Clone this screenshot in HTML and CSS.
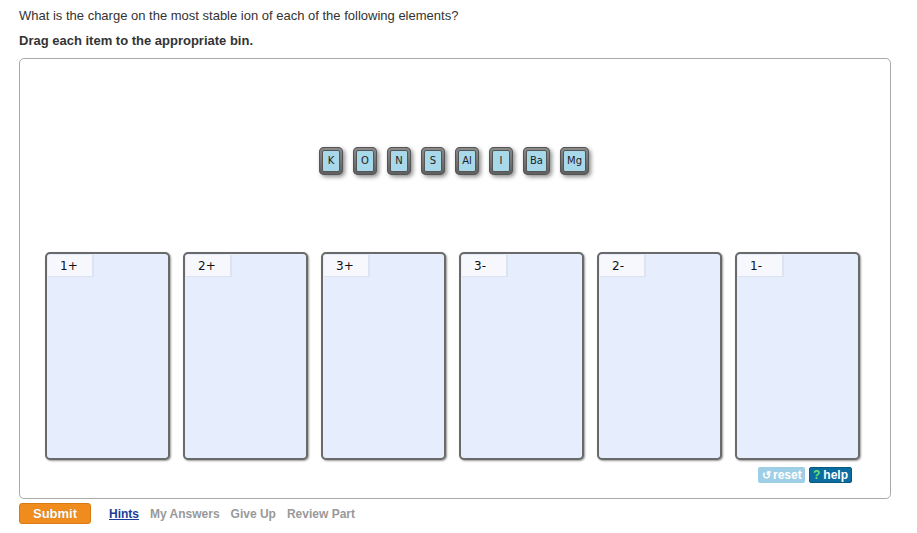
FILE: index.html
```html
<!DOCTYPE html>
<html>
<head>
<meta charset="utf-8">
<link rel="stylesheet" href="styles.css">
</head>
<body>
<div class="page">
  <p class="question">What is the charge on the most stable ion of each of the following elements?</p>
  <p class="instruction">Drag each item to the appropriate bin.</p>
  <div class="board">
    <div class="tiles">
      <span class="tile"><span class="tile-in">K</span></span>
      <span class="tile"><span class="tile-in">O</span></span>
      <span class="tile"><span class="tile-in">N</span></span>
      <span class="tile"><span class="tile-in">S</span></span>
      <span class="tile"><span class="tile-in">Al</span></span>
      <span class="tile"><span class="tile-in">I</span></span>
      <span class="tile"><span class="tile-in">Ba</span></span>
      <span class="tile"><span class="tile-in">Mg</span></span>
    </div>
    <div class="bins">
      <div class="bin"><span class="bin-label">1+</span></div>
      <div class="bin"><span class="bin-label">2+</span></div>
      <div class="bin"><span class="bin-label">3+</span></div>
      <div class="bin"><span class="bin-label">3-</span></div>
      <div class="bin"><span class="bin-label">2-</span></div>
      <div class="bin"><span class="bin-label">1-</span></div>
    </div>
    <div class="tools">
      <span class="btn-reset"><span class="ico">&#8634;</span> reset</span>
      <span class="btn-help"><span class="q">?</span> help</span>
    </div>
  </div>
  <div class="actions">
    <span class="submit">Submit</span>
    <a class="link hints" href="#">Hints</a>
    <span class="link">My Answers</span>
    <span class="link">Give Up</span>
    <span class="link">Review Part</span>
  </div>
</div>
</body>
</html>
```
FILE: styles.css
```css
html, body { margin: 0; padding: 0; background: #fff; }
.page {
  padding: 8px 26px 0 19px;
  font-family: "Liberation Sans", Arial, sans-serif;
  font-size: 12px;
  color: #333;
}
.question { margin: 0; line-height: 15px; font-size: 13px; }
.instruction { margin: 10px 0 0; font-weight: bold; line-height: 15px; font-size: 13px; }
.board {
  margin-top: 10px;
  width: 870px;
  height: 439px;
  border: 1px solid #aaa;
  border-radius: 5px;
  box-sizing: content-box;
  display: flex;
  flex-direction: column;
}
.tiles {
  display: flex;
  justify-content: center;
  gap: 10px;
  margin-top: 88px;
  padding-right: 2px;
}
.tile {
  display: inline-block;
  padding: 3px;
  border-radius: 5px;
  background: linear-gradient(#8c8c8c, #5e5e5e);
  box-shadow: 2px 2px 4px rgba(0,0,0,0.45), inset 0 0 0 1px #555;
}
.tile-in {
  display: block;
  min-width: 10px;
  height: 20px;
  line-height: 20px;
  padding: 0 3px;
  text-align: center;
  background: #a8d9ea;
  border: 1px solid #555;
  border-radius: 2px;
  font-family: "DejaVu Sans", Verdana, sans-serif;
  font-size: 10px;
  color: #222;
}
.bins {
  display: flex;
  gap: 13px;
  margin-top: 77px;
  padding-left: 25px;
}
.bin {
  width: 121px;
  height: 204px;
  background: #e6edfd;
  border: 2px solid #6a6a6a;
  border-radius: 5px;
  box-shadow: 1px 1px 2px rgba(0,0,0,0.4);
}
.bin-label {
  display: block;
  width: 32px;
  height: 21px;
  margin: 1px 0 0 1px;
  padding-left: 12px;
  line-height: 22px;
  background: #f6f8fe;
  border-right: 2px solid #dde3f0;
  border-bottom: 1px solid #dde3f0;
  font-family: "DejaVu Sans", Verdana, sans-serif;
  font-size: 12px;
  color: #111;
}
.tools {
  display: flex;
  justify-content: flex-end;
  gap: 4px;
  margin-top: 7px;
  padding-right: 38px;
}
.btn-reset, .btn-help {
  display: inline-flex;
  align-items: center;
  height: 16px;
  padding: 0 4px;
  font-weight: bold;
  font-size: 12px;
  color: #fff;
  border-radius: 2px;
}
.btn-reset { background: #9fcfe6; width: 39px; }
.btn-help { background: #0b6d9f; border: 1px solid #08587f; height: 14px; padding: 0 3px; }
.ico { margin-right: 2px; font-size: 11px; }
.q { color: #6ee26e; margin-right: 3px; }
.actions {
  display: flex;
  align-items: center;
  margin-top: 4px;
  gap: 11px;
  font-weight: bold;
}
.submit {
  display: inline-block;
  width: 70px;
  height: 19px;
  line-height: 19px;
  text-align: center;
  color: #fff;
  background: #ef8c1d;
  border: 1px solid #d97a12;
  border-radius: 3px;
  margin-right: 7px;
  font-size: 13px;
  text-shadow: 0 0 1px rgba(0,0,0,0.2);
}
.link { color: #999; }
.hints { color: #1a3d9a; text-decoration: underline; }
```
